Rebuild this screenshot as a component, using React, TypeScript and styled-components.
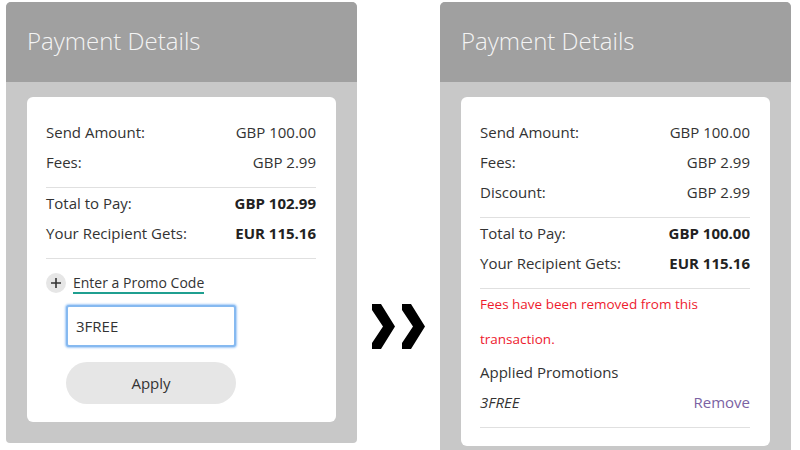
import React from "react";
import styled, { createGlobalStyle } from "styled-components";

const Global = createGlobalStyle`
  html, body { margin: 0; padding: 0; background: #fff; overflow: hidden; }
  body { font-family: "Open Sans", "Liberation Sans", sans-serif; color: #333; }
  * { box-sizing: border-box; }
`;

const Page = styled.div`
  display: flex;
  align-items: flex-start;
  padding: 2px 0 0 6px;
`;

const Panel = styled.section`
  width: 351px;
  border-radius: 5px 5px 4px 4px;
  background: #c8c8c8;
  overflow: hidden;
`;

const Header = styled.header`
  height: 80px;
  background: #a0a0a0;
  display: flex;
  align-items: center;
  padding: 0 0 4px 21px;
  font-size: 24px;
  font-weight: 300;
  color: #f4f4f4;
`;

const Body = styled.div`
  padding: 15px 21px 21px;
`;

const Card = styled.div`
  background: #fff;
  border-radius: 6px;
  padding: 20px 20px 18px 19px;
`;

const Row = styled.div`
  display: flex;
  justify-content: space-between;
  align-items: center;
  height: 30px;
  font-size: 15px;
  color: #333;
`;

const Value = styled.span<{ $bold?: boolean }>`
  font-weight: ${(p) => (p.$bold ? 700 : 400)};
  color: ${(p) => (p.$bold ? "#222" : "#333")};
`;

const Divider = styled.hr`
  border: none;
  border-top: 1px solid #e0e0e0;
  margin: 10px 0 0;
`;

const PromoToggle = styled.div`
  display: flex;
  align-items: center;
  gap: 7px;
  margin-top: 14px;
  height: 20px;
`;

const PlusCircle = styled.span`
  width: 20px;
  height: 20px;
  border-radius: 50%;
  background: #e6e6e6;
  display: flex;
  align-items: center;
  justify-content: center;
`;

const PromoLink = styled.span`
  font-size: 14px;
  color: #333;
  border-bottom: 2px solid #1f9f90;
  line-height: 18px;
  padding-top: 1px;
`;

const PromoForm = styled.div`
  display: flex;
  flex-direction: column;
  gap: 15px;
  padding-left: 20px;
  margin-top: 12px;
`;

const Input = styled.input`
  width: 170px;
  height: 42px;
  border: 2px solid #86b9f0;
  border-radius: 3px;
  box-shadow: 0 0 2px 1px rgba(90, 160, 240, 0.55);
  padding: 0 8px;
  font-family: "Open Sans", "Liberation Sans", sans-serif;
  font-size: 15px;
  color: #333;
  outline: none;
`;

const ApplyButton = styled.button`
  width: 170px;
  height: 42px;
  border: none;
  border-radius: 21px;
  background: #e6e6e6;
  font-family: "Open Sans", "Liberation Sans", sans-serif;
  font-size: 15px;
  color: #333;
`;

const Notice = styled.p`
  margin: -2px 0 0;
  font-size: 13.5px;
  line-height: 35px;
  color: #ee1b2e;
  padding-right: 40px;
`;

const PromoTitle = styled.div`
  height: 30px;
  display: flex;
  align-items: center;
  font-size: 15px;
  color: #333;
`;

const PromoRow = styled(Row)`
  font-size: 15px;
`;

const Code = styled.span`
  font-style: italic;
  color: #333;
`;

const RemoveLink = styled.span`
  color: #7b62a3;
`;

const ArrowSlot = styled.div`
  width: 83px;
  display: flex;
  justify-content: center;
  padding-top: 302px;
`;

const Arrows = () => (
  <svg width="54" height="45" viewBox="0 0 54 45">
    <path d="M0 0 L9 0 L23 22.5 L9 45 L0 45 L0 39 L11 22.5 L0 6 Z" fill="#000" />
    <path d="M30 0 L39 0 L53 22.5 L39 45 L30 45 L30 39 L41 22.5 L30 6 Z" fill="#000" />
  </svg>
);

export default function App() {
  return (
    <>
      <Global />
      <Page>
        <Panel>
          <Header>Payment Details</Header>
          <Body>
            <Card>
              <Row>
                <span>Send Amount:</span>
                <Value>GBP 100.00</Value>
              </Row>
              <Row>
                <span>Fees:</span>
                <Value>GBP 2.99</Value>
              </Row>
              <Divider />
              <Row>
                <span>Total to Pay:</span>
                <Value $bold>GBP 102.99</Value>
              </Row>
              <Row>
                <span>Your Recipient Gets:</span>
                <Value $bold>EUR 115.16</Value>
              </Row>
              <Divider />
              <PromoToggle>
                <PlusCircle>
                  <svg width="10" height="10" viewBox="0 0 10 10">
                    <path d="M5 0 V10 M0 5 H10" stroke="#333" strokeWidth="1.6" />
                  </svg>
                </PlusCircle>
                <PromoLink>Enter a Promo Code</PromoLink>
              </PromoToggle>
              <PromoForm>
                <Input defaultValue="3FREE" />
                <ApplyButton>Apply</ApplyButton>
              </PromoForm>
            </Card>
          </Body>
        </Panel>
        <ArrowSlot>
          <Arrows />
        </ArrowSlot>
        <Panel>
          <Header>Payment Details</Header>
          <Body>
            <Card>
              <Row>
                <span>Send Amount:</span>
                <Value>GBP 100.00</Value>
              </Row>
              <Row>
                <span>Fees:</span>
                <Value>GBP 2.99</Value>
              </Row>
              <Row>
                <span>Discount:</span>
                <Value>GBP 2.99</Value>
              </Row>
              <Divider />
              <Row>
                <span>Total to Pay:</span>
                <Value $bold>GBP 100.00</Value>
              </Row>
              <Row>
                <span>Your Recipient Gets:</span>
                <Value $bold>EUR 115.16</Value>
              </Row>
              <Divider />
              <Notice>Fees have been removed from this transaction.</Notice>
              <PromoTitle>Applied Promotions</PromoTitle>
              <PromoRow>
                <Code>3FREE</Code>
                <RemoveLink>Remove</RemoveLink>
              </PromoRow>
              <Divider />
            </Card>
          </Body>
        </Panel>
      </Page>
    </>
  );
}
